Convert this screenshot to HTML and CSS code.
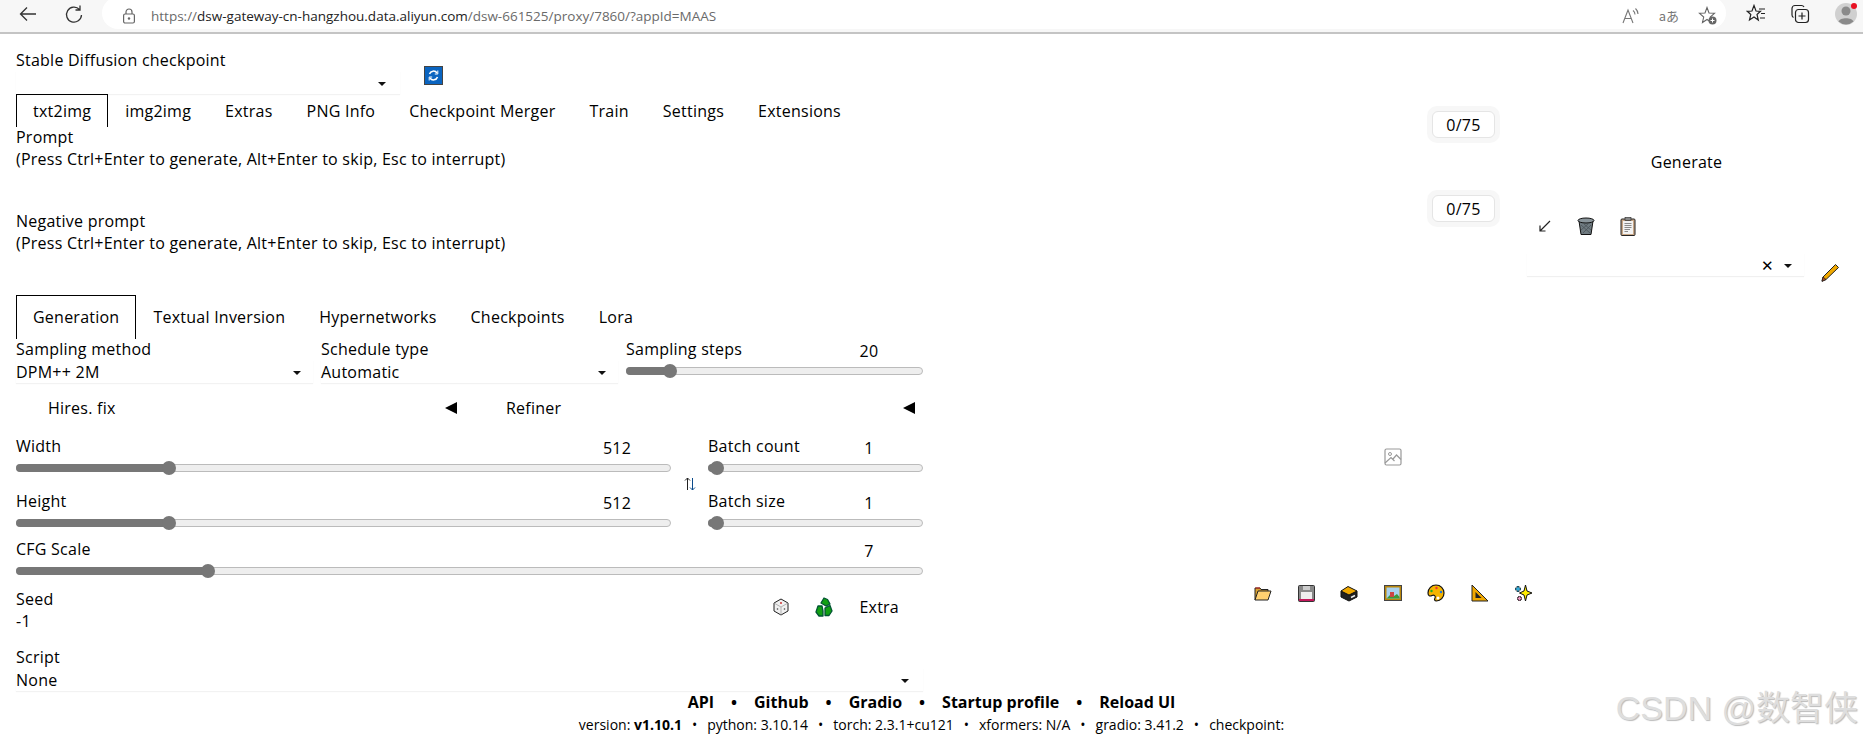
FILE: index.html
```html
<!DOCTYPE html>
<html lang="en">
<head>
    <meta charset="UTF-8">
    <title>Stable Diffusion</title>
    <link rel="stylesheet" href="styles.css">
</head>
<body>
    <!-- Browser bar -->
    <header class="browser-bar">
        <svg class="nav-icon" width="20" height="20" viewBox="0 0 20 20"><path d="M18 10H3M9 3.500L2.500 10L9 16.500" fill="none" stroke="#333" stroke-width="1.300"/></svg>
        <svg class="nav-icon" width="20" height="20" viewBox="0 0 20 20"><path d="M15.500 5.500A7.500 7.500 0 1 0 17.500 11M16 1.500V6H11.500" fill="none" stroke="#333" stroke-width="1.300"/></svg>
        <div class="url-pill">
            <svg width="14" height="16" viewBox="0 0 14 16"><path d="M4 6V4a3 3 0 0 1 6 0v2" fill="none" stroke="#666" stroke-width="1.200"/><rect x="1.600" y="6" width="10.800" height="9" rx="1.500" fill="none" stroke="#666" stroke-width="1.200"/><circle cx="7" cy="10.500" r="1.200" fill="#666"/></svg>
            <span class="url">https://<span class="url-host">dsw-gateway-cn-hangzhou.data.aliyun.com</span>/dsw-661525/proxy/7860/?appId=MAAS</span>
            <div class="url-actions">
                <svg width="18" height="18" viewBox="0 0 18 18"><path d="M1 16L6 3L11 16M3 11.500H9.500M11 3.500A5 5 0 0 1 13 7.500M13.500 1.500A8 8 0 0 1 16 7" fill="none" stroke="#777" stroke-width="1.100"/></svg>
                <span class="translate-mark">aあ</span>
                <svg width="20" height="20" viewBox="0 0 20 20"><path d="M9 1.500L11 7L16.500 7.300L12.300 11L13.500 16.500L9 13.500L4.500 16.500L5.700 11L1.500 7.300L7 7Z" fill="none" stroke="#666" stroke-width="1.100"/><circle cx="14.500" cy="14.500" r="4" fill="#666"/><path d="M12.500 14.500h4M14.500 12.500v4" stroke="#fff"/></svg>
            </div>
        </div>
        <svg class="bar-icon" width="20" height="20" viewBox="0 0 20 20"><path d="M8 1.500L10 7L14.500 7.300L11 10.500L12.300 16L8 13L3.500 16L4.800 10.500L1.300 7.300L6 7Z" fill="none" stroke="#222" stroke-width="1.200"/><path d="M13 5h6M15 9.500h4M14 14h5" stroke="#222" stroke-width="1.200"/></svg>
        <svg class="bar-icon" width="20" height="20" viewBox="0 0 20 20"><rect x="5.500" y="5.500" width="13" height="13" rx="3" fill="none" stroke="#222" stroke-width="1.200"/><path d="M12 8.500v7M8.500 12h7M3.500 13.500A3 3 0 0 1 2 11V4.500A3 3 0 0 1 5 1.500H11.500A3 3 0 0 1 14 3" fill="none" stroke="#222" stroke-width="1.200"/></svg>
        <div class="avatar">
            <svg width="22" height="22" viewBox="0 0 22 22"><circle cx="11" cy="11" r="11" fill="#d0d0d0"/><circle cx="11" cy="8" r="4.500" fill="#8a8a8a"/><path d="M3.500 18.500C5 14 17 14 18.500 18.500A11 11 0 0 1 3.500 18.500Z" fill="#8a8a8a"/></svg>
            <span class="avatar-dot"></span>
        </div>
    </header>

    <main class="app">
        <!-- Checkpoint -->
        <div class="checkpoint-row">
            <div class="checkpoint-field">
                <div class="label">Stable Diffusion checkpoint</div>
                <div class="dropdown dropdown-empty"><span class="caret"></span></div>
            </div>
            <svg class="refresh-icon" width="19" height="19" viewBox="0 0 19 19"><rect width="19" height="19" fill="#0a64c0"/><rect x="0.500" y="0.500" width="18" height="18" fill="none" stroke="#444"/><path d="M5.500 8A4.200 4.200 0 0 1 13 7M13.500 11A4.200 4.200 0 0 1 6 12" fill="none" stroke="#fff" stroke-width="1.500"/><path d="M13.800 4.500V8H10.800M5.200 14.500V11H8.200" fill="none" stroke="#fff"/></svg>
        </div>

        <nav class="tabs tabs-top">
            <a class="tab tab-active">txt2img</a>
            <a class="tab">img2img</a>
            <a class="tab">Extras</a>
            <a class="tab">PNG Info</a>
            <a class="tab">Checkpoint Merger</a>
            <a class="tab">Train</a>
            <a class="tab">Settings</a>
            <a class="tab">Extensions</a>
        </nav>

        <!-- Prompts and generate -->
        <section class="toprow">
            <div class="prompts">
                <div class="prompt">
                    <div class="label">Prompt</div>
                    <div class="label">(Press Ctrl+Enter to generate, Alt+Enter to skip, Esc to interrupt)</div>
                    <div class="token-counter"><span>0/75</span></div>
                </div>
                <div class="prompt">
                    <div class="label">Negative prompt</div>
                    <div class="label">(Press Ctrl+Enter to generate, Alt+Enter to skip, Esc to interrupt)</div>
                    <div class="token-counter"><span>0/75</span></div>
                </div>
            </div>
            <div class="actions">
                <div class="generate">Generate</div>
                <div class="action-tools">
                    <svg width="14" height="14" viewBox="0 0 14 14"><path d="M12 2L2 12M2 6.500V12H7.500" fill="none" stroke="#222" stroke-width="1.200"/></svg>
                    <svg width="18" height="19" viewBox="0 0 18 19"><path d="M2 4L4 17.500H14L16 4" fill="#6f7a80" stroke="#111"/><ellipse cx="9" cy="3.500" rx="8" ry="2.500" fill="#8a959b" stroke="#111"/><path d="M4 8L13 16M14 8L6 16M7 7L14 13M11 7L4 13" stroke="#4a5358" stroke-width="0.800"/></svg>
                    <svg width="16" height="19" viewBox="0 0 16 19"><rect x="1" y="2" width="14" height="16.500" rx="1" fill="#c9a888" stroke="#222"/><rect x="3" y="4" width="10" height="13" fill="#f2f2f2"/><rect x="5" y="0.500" width="6" height="3" fill="#888" stroke="#222" stroke-width="0.600"/><path d="M4.500 6.500H11.500M4.500 8.500H11.500M4.500 10.500H11.500M4.500 12.500H10M4.500 14.500H8" stroke="#8a8a8a"/></svg>
                </div>
                <div class="style-row">
                    <div class="style-select">
                        <span class="clear-mark">✕</span>
                        <span class="caret"></span>
                    </div>
                    <svg width="20" height="20" viewBox="0 0 20 20"><path d="M15.500 1.500L18.500 4.500L6 16.500L2 18L3 14Z" fill="#f0a800" stroke="#222"/><path d="M3 14L6 16.500L2 18.500Z" fill="#b04a20" stroke="#222" stroke-width="0.800"/></svg>
                </div>
            </div>
        </section>

        <div class="workspace">
            <!-- Settings column -->
            <section class="settings">
                <nav class="tabs tabs-sub">
                    <a class="tab tab-active">Generation</a>
                    <a class="tab">Textual Inversion</a>
                    <a class="tab">Hypernetworks</a>
                    <a class="tab">Checkpoints</a>
                    <a class="tab">Lora</a>
                </nav>

                <div class="sampling-row">
                    <div>
                        <div class="label">Sampling method</div>
                        <div class="dropdown"><span>DPM++ 2M</span><span class="caret"></span></div>
                    </div>
                    <div>
                        <div class="label">Schedule type</div>
                        <div class="dropdown"><span>Automatic</span><span class="caret"></span></div>
                    </div>
                    <div class="slider">
                        <div class="slider-head"><span class="label">Sampling steps</span><span class="slider-value">20</span></div>
                        <div class="track"><div class="fill" style="width: 15%"></div></div>
                    </div>
                </div>

                <div class="accordion-row">
                    <div class="accordion"><span>Hires. fix</span><span class="arrow-left"></span></div>
                    <div class="accordion"><span>Refiner</span><span class="arrow-left"></span></div>
                </div>

                <div class="size-grid">
                    <div class="size-col">
                        <div class="slider">
                            <div class="slider-head"><span class="label">Width</span><span class="slider-value">512</span></div>
                            <div class="track"><div class="fill" style="width: 23.500%"></div></div>
                        </div>
                        <div class="slider">
                            <div class="slider-head"><span class="label">Height</span><span class="slider-value">512</span></div>
                            <div class="track"><div class="fill" style="width: 23.500%"></div></div>
                        </div>
                    </div>
                    <svg class="swap-icon" width="14" height="16" viewBox="0 0 14 16"><path d="M4.500 14V2M2 4.500L4.500 2L7 4.500" fill="none" stroke="#222"/><path d="M9.500 2V14M7 11.500L9.500 14L12 11.500" fill="none" stroke="#0a4a8a"/></svg>
                    <div class="size-col">
                        <div class="slider">
                            <div class="slider-head"><span class="label">Batch count</span><span class="slider-value">1</span></div>
                            <div class="track"><div class="fill" style="width: 4%"></div></div>
                        </div>
                        <div class="slider">
                            <div class="slider-head"><span class="label">Batch size</span><span class="slider-value">1</span></div>
                            <div class="track"><div class="fill" style="width: 4%"></div></div>
                        </div>
                    </div>
                </div>

                <div class="slider slider-cfg">
                    <div class="slider-head"><span class="label">CFG Scale</span><span class="slider-value">7</span></div>
                    <div class="track"><div class="fill" style="width: 21.200%"></div></div>
                </div>

                <div class="seed-row">
                    <div>
                        <div class="label">Seed</div>
                        <div class="label">-1</div>
                    </div>
                    <div class="seed-tools">
                        <svg width="18" height="18" viewBox="0 0 18 18"><path d="M9 1L16 5V13L9 17L2 13V5Z" fill="#f0f0f0" stroke="#222"/><path d="M2 5L9 9L16 5M9 9V17" fill="none" stroke="#999" stroke-width="0.700"/><circle cx="9" cy="5" r="1" fill="#c33"/><circle cx="5.500" cy="11" r="0.800" fill="#444"/><circle cx="12.500" cy="11" r="0.800" fill="#444"/></svg>
                        <svg width="18" height="20" viewBox="0 0 18 20"><path d="M6 6L9 1L12.500 2.500L15 7L11 9ZM3 9L7 9L8 14L8 19H4L1 15ZM10 11L15 8.500L17 14L14 18.500H10Z" fill="#12a012" stroke="#053" stroke-width="1.300" stroke-linejoin="round"/></svg>
                        <span class="extra">Extra</span>
                    </div>
                </div>

                <div class="script-field">
                    <div class="label">Script</div>
                    <div class="dropdown"><span>None</span><span class="caret"></span></div>
                </div>
            </section>

            <!-- Output column -->
            <section class="output">
                <svg class="image-placeholder" width="18" height="18" viewBox="0 0 18 18"><rect x="1" y="1" width="16" height="16" rx="1.500" fill="none" stroke="#999" stroke-width="1.200"/><circle cx="6" cy="6" r="1.500" fill="none" stroke="#999"/><path d="M1 15L7 9.500L10.500 13M9 11L12.500 7L17 11.500" fill="none" stroke="#999" stroke-width="1.200"/></svg>
                <div class="output-tools">
                    <svg width="18" height="15" viewBox="0 0 18 15"><path d="M1 14V2H6L7 3.500H14V5" fill="#d8a030" stroke="#222"/><path d="M1 14L4 5H17L14 14Z" fill="#ffd070" stroke="#222"/><path d="M1.500 2H6" stroke="#c22"/></svg>
                    <svg width="17" height="17" viewBox="0 0 17 17"><rect x="0.500" y="0.500" width="16" height="16" rx="1" fill="#888" stroke="#333"/><rect x="3" y="7" width="11" height="7" fill="#eee"/><rect x="5" y="1" width="7" height="4" fill="#ccc"/><rect x="1" y="14" width="15" height="2" fill="#c2185b"/></svg>
                    <svg width="18" height="17" viewBox="0 0 18 17"><path d="M1 6L9 10L17 6V12L9 16L1 12Z" fill="#222" stroke="#111"/><path d="M1 6L8 1.500L17 6L9 10Z" fill="#f0a800" stroke="#111"/><path d="M11 12.500L15 10.500" stroke="#eee" stroke-width="1.500"/></svg>
                    <svg width="18" height="16" viewBox="0 0 18 16"><rect x="0.500" y="0.500" width="17" height="15" fill="#b8860b" stroke="#444"/><rect x="2.500" y="2.500" width="13" height="11" fill="#a8d0ee"/><path d="M2.500 13.500L8 8L10 11L13 9L15.500 12V13.500Z" fill="#3a9a3a"/><rect x="6" y="7" width="4" height="5" fill="#c44"/></svg>
                    <svg width="18" height="18" viewBox="0 0 18 18"><path d="M9 1C13.500 1 17 4.500 17 9C17 13.500 13.500 17 9.500 17C7.500 17 7 15.500 8 14C9 12 7 10.500 5 11.500C3 12.500 1 12 1 9C1 4.500 4.500 1 9 1Z" fill="#f5b400" stroke="#111" stroke-width="1.200"/><circle cx="9.500" cy="4" r="1.200" fill="#e33"/><circle cx="4.500" cy="7" r="1.200" fill="#2a2"/><circle cx="14" cy="8" r="1.200" fill="#27d"/><circle cx="11" cy="14" r="1.500" fill="#fff"/></svg>
                    <svg width="18" height="18" viewBox="0 0 18 18"><path d="M1 1V17H17Z" fill="#f0a800" stroke="#222"/><path d="M4.500 8V14H10.500Z" fill="#222"/></svg>
                    <svg width="18" height="18" viewBox="0 0 18 18"><path d="M11.500 1L13 7L18 9L13 11L11.500 17L10 11L5.500 9L10 7Z" fill="#ffec00" stroke="#111"/><path d="M4 2V8M1 5H7" stroke="#111" stroke-width="2.600"/><path d="M4 2.500V7.500M1.500 5H6.500" stroke="#3ab8ea" stroke-width="1.400"/><path d="M5.500 12V17M3 14.500H8" stroke="#111" stroke-width="2.600"/><path d="M5.500 12.500V16.500M3.500 14.500H7.500" stroke="#f09ac4" stroke-width="1.400"/></svg>
                </div>
            </section>
        </div>

        <footer class="footer">
            <div class="footer-links">
                <a>API</a><span class="dot">•</span><a>Github</a><span class="dot">•</span><a>Gradio</a><span class="dot">•</span><a>Startup profile</a><span class="dot">•</span><a>Reload UI</a>
            </div>
            <div class="versions">
                version: <b>v1.10.1</b><span class="dot-small">•</span>python: 3.10.14<span class="dot-small">•</span>torch: 2.3.1+cu121<span class="dot-small">•</span>xformers: N/A<span class="dot-small">•</span>gradio: 3.41.2<span class="dot-small">•</span>checkpoint:
            </div>
        </footer>
    </main>

    <div class="watermark">CSDN @数智侠</div>
</body>
</html>
```

FILE: styles.css
```css
* {
    box-sizing: border-box;
}
html, body {
    margin: 0;
    height: 100%;
    overflow: hidden;
}
body {
    position: relative;
    background-color: #fff;
    color: #000;
    font-family: "Open Sans", "Liberation Sans", sans-serif;
    font-size: 16px;
    letter-spacing: 0.24px;
    line-height: 22px;
}

/* Browser bar */
.browser-bar {
    display: flex;
    align-items: flex-start;
    height: 34px;
    padding-top: 3px;
    background-color: #f7f7f7;
    border-bottom: 2px solid #c4c4c4;
    letter-spacing: 0;
}
.nav-icon {
    margin: 1px 0 0 18px;
}
.nav-icon + .nav-icon {
    margin-left: 26px;
}
.url-pill {
    display: flex;
    align-items: center;
    flex: 1;
    height: 32px;
    margin: -6px 0 0 18px;
    padding: 6px 8px 0 20px;
    background-color: #fff;
    border-radius: 16px;
}
.url {
    margin-left: 15px;
    color: #6a6a6a;
    font-size: 13.500px;
    white-space: nowrap;
}
.url-host {
    color: #222;
}
.url-actions {
    display: flex;
    align-items: center;
    gap: 19px;
    margin-left: auto;
}
.translate-mark {
    color: #777;
    font-family: "Noto Sans CJK JP", sans-serif;
    font-size: 13px;
    line-height: 18px;
}
.bar-icon {
    margin: 1px 0 0 20px;
}
.bar-icon + .bar-icon {
    margin-left: 24px;
}
.avatar {
    position: relative;
    height: 22px;
    margin: 0 6px 0 25px;
}
.avatar-dot {
    position: absolute;
    top: 0;
    right: 0;
    width: 6px;
    height: 6px;
    background-color: #e81123;
    border-radius: 50%;
}

/* App */
.app {
    padding: 15px 0 0 16px;
}
.label {
    line-height: 22px;
}
.dropdown {
    display: flex;
    align-items: center;
    justify-content: space-between;
    height: 23px;
    padding-right: 14px;
    box-shadow: 0 1px 1px #f2f2f2;
}
.dropdown-empty {
    justify-content: flex-end;
}
.caret {
    display: inline-block;
    width: 0;
    height: 0;
    margin-top: 3px;
    border-left: 4px solid transparent;
    border-right: 4px solid transparent;
    border-top: 4px solid #111;
}

.checkpoint-row {
    display: flex;
    align-items: flex-end;
}
.checkpoint-field {
    width: 384px;
}
.refresh-icon {
    margin: 0 0 9px 24px;
}

/* Tabs */
.tabs {
    display: flex;
}
.tab {
    display: block;
    padding: 0 16px;
    border: 1px solid transparent;
    border-bottom: 0;
}
.tabs-top {
    height: 33px;
}
.tabs-top .tab {
    line-height: 33px;
}
.tabs-sub {
    height: 44px;
}
.tabs-sub .tab {
    line-height: 43px;
}
.tab-active {
    border-color: #000;
}

/* Prompt row */
.toprow {
    display: flex;
    height: 168px;
}
.prompts {
    width: 1508px;
}
.prompt {
    position: relative;
    height: 84px;
    margin-top: -1px;
    margin-bottom: 1px;
}
.token-counter {
    position: absolute;
    top: -20px;
    right: 24px;
    padding: 5px;
    background-color: #f7f7f7;
    border-radius: 10px;
}
.token-counter span {
    display: block;
    width: 63px;
    height: 27px;
    background-color: #fff;
    border: 1px solid #e5e5e5;
    border-radius: 6px;
    line-height: 26px;
    text-align: center;
}
.actions {
    width: 339px;
}
.generate {
    height: 72px;
    padding-right: 14px;
    line-height: 71px;
    text-align: center;
}
.action-tools {
    display: flex;
    align-items: center;
    gap: 25px;
    height: 34px;
    margin-top: 10px;
    padding-left: 14px;
}
.style-row {
    display: flex;
    align-items: flex-start;
    margin-top: 10px;
    padding-left: 3px;
}
.style-row svg {
    margin: 10px 0 0 16px;
}
.style-select {
    display: flex;
    align-items: center;
    justify-content: flex-end;
    gap: 10px;
    width: 277px;
    height: 23px;
    padding-right: 12px;
    box-shadow: 0 1px 1px #f0f0f0;
}
.clear-mark {
    font-size: 15px;
}

/* Settings column */
.workspace {
    display: flex;
}
.settings {
    width: 907px;
}
.sampling-row {
    display: grid;
    grid-template-columns: repeat(3, 297px);
    gap: 8px;
    height: 45px;
    margin-top: -1px;
}
.sampling-row .dropdown {
    padding-right: 12px;
}
.slider-head {
    display: flex;
    justify-content: space-between;
    height: 22px;
}
.slider-value {
    width: 108px;
    padding-top: 2px;
    text-align: center;
}
.track {
    position: relative;
    height: 8px;
    margin-top: 7px;
    background-color: #eee;
    border: 1px solid #bbb;
    border-radius: 4px;
}
.fill {
    position: relative;
    height: 8px;
    margin: -1px 0 0 -1px;
    background-color: #777;
    border-radius: 4px 0 0 4px;
}
.fill::after {
    content: "";
    position: absolute;
    top: -3px;
    right: -7px;
    width: 14px;
    height: 14px;
    background-color: #777;
    border-radius: 50%;
}
.accordion-row {
    display: grid;
    grid-template-columns: 449px 449px;
    gap: 9px;
    margin-top: 12px;
}
.accordion {
    display: flex;
    align-items: center;
    justify-content: space-between;
    height: 26px;
    padding: 0 8px 0 32px;
}
.arrow-left {
    width: 0;
    height: 0;
    border-top: 6px solid transparent;
    border-bottom: 6px solid transparent;
    border-right: 12px solid #000;
}
.size-grid {
    display: grid;
    grid-template-columns: 655px 37px 215px;
    align-items: center;
    margin-top: 14px;
}
.size-col {
    display: flex;
    flex-direction: column;
    gap: 18px;
}
.size-col .slider {
    height: 37px;
}
.swap-icon {
    justify-self: center;
    margin-top: 6px;
}
.slider-cfg {
    margin-top: 11px;
}
.seed-row {
    display: flex;
    align-items: center;
    justify-content: space-between;
    margin-top: 13px;
}
.seed-tools {
    display: flex;
    align-items: center;
    gap: 25px;
    padding: 0 24px 6px 0;
}
.extra {
    margin-left: 1px;
}
.script-field {
    margin-top: 14px;
}

/* Output column */
.output {
    flex: 1;
    display: flex;
    flex-direction: column;
    align-items: center;
    padding-top: 153px;
}
.output-tools {
    display: flex;
    align-items: center;
    gap: 25.500px;
    margin-top: 118px;
}

/* Footer */
.footer {
    margin-left: -16px;
    text-align: center;
}
.footer-links {
    font-weight: 700;
    letter-spacing: 0;
    line-height: 22px;
}
.dot {
    margin: 0 17px;
}
.versions {
    margin-top: 1px;
    font-size: 14px;
    letter-spacing: 0;
    line-height: 22px;
}
.dot-small {
    margin: 0 10px;
}

/* Watermark */
.watermark {
    position: absolute;
    top: 688px;
    right: 5px;
    color: #dedede;
    font-family: "Liberation Sans", "Noto Sans CJK SC", sans-serif;
    font-size: 34px;
    letter-spacing: 0;
    line-height: 40px;
    text-shadow: 1px 1px 1px #bbb;
    white-space: nowrap;
}
```
